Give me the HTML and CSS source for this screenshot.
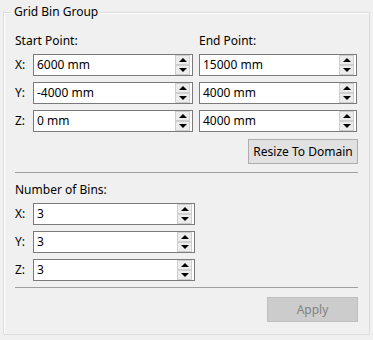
FILE: index.html
```html
<!DOCTYPE html>
<html lang="en">
<head>
    <meta charset="UTF-8">
    <title>Grid Bin Group</title>
    <link rel="stylesheet" href="styles.css">
</head>
<body>
    <div class="group">
        <div class="group-title">Grid Bin Group</div>

        <div class="point-grid">
            <div class="head">Start Point:</div>
            <div class="head end">End Point:</div>

            <div class="axis">X:</div>
            <div class="spin"><span class="value">6000 mm</span><div class="arrows"><i class="up"></i><i class="down"></i></div></div>
            <div class="spin"><span class="value">15000 mm</span><div class="arrows"><i class="up"></i><i class="down"></i></div></div>

            <div class="axis">Y:</div>
            <div class="spin"><span class="value">-4000 mm</span><div class="arrows"><i class="up"></i><i class="down"></i></div></div>
            <div class="spin"><span class="value">4000 mm</span><div class="arrows"><i class="up"></i><i class="down"></i></div></div>

            <div class="axis">Z:</div>
            <div class="spin"><span class="value">0 mm</span><div class="arrows"><i class="up"></i><i class="down"></i></div></div>
            <div class="spin"><span class="value">4000 mm</span><div class="arrows"><i class="up"></i><i class="down"></i></div></div>
        </div>

        <div class="button-row first">
            <button class="btn resize">Resize To Domain</button>
        </div>

        <div class="separator"></div>

        <div class="bins-grid">
            <div class="head">Number of Bins:</div>

            <div class="axis">X:</div>
            <div class="spin"><span class="value">3</span><div class="arrows"><i class="up"></i><i class="down"></i></div></div>

            <div class="axis">Y:</div>
            <div class="spin"><span class="value">3</span><div class="arrows"><i class="up"></i><i class="down"></i></div></div>

            <div class="axis">Z:</div>
            <div class="spin"><span class="value">3</span><div class="arrows"><i class="up"></i><i class="down"></i></div></div>
        </div>

        <div class="separator second"></div>

        <div class="button-row last">
            <button class="btn apply" disabled>Apply</button>
        </div>
    </div>
</body>
</html>
```

FILE: styles.css
```css
body {
    margin: 0;
    background: #f0f0f0;
    font-family: "Noto Sans", "Open Sans", sans-serif;
    font-size: 12px;
    color: #000;
}
.group {
    position: relative;
    box-sizing: border-box;
    width: 367px;
    height: 323px;
    margin: 12px 0 0 3px;
    padding: 20px 11px 0 11px;
    border: 1px solid #dcdcdc;
    box-shadow: inset 1px 1px 0 #fff;
}
.group-title {
    position: absolute;
    top: -9px;
    left: 7px;
    padding: 0 3px;
    background: #f0f0f0;
    line-height: 16px;
}
.point-grid, .bins-grid {
    display: grid;
    grid-template-columns: 12px 160px 158px;
    grid-auto-rows: 22px;
    grid-template-rows: 15px;
    column-gap: 6px;
    row-gap: 6px;
}
.bins-grid {
    grid-template-columns: 12px 162px;
    margin-top: 9px;
}
.head {
    grid-column: 1 / span 2;
    line-height: 15px;
}
.head.end {
    grid-column: 3;
}
.axis {
    line-height: 22px;
}
.spin {
    display: flex;
    align-items: center;
    box-sizing: border-box;
    border: 1px solid #7a7a7a;
    background: #fff;
}
.spin .value {
    flex: 1;
    padding-left: 3px;
    line-height: 20px;
}
.arrows {
    display: flex;
    flex-direction: column;
    width: 15px;
    height: 20px;
    margin-right: 2px;
}
.arrows i {
    flex: 1;
    display: flex;
    align-items: center;
    justify-content: center;
    box-sizing: border-box;
    border: 1px solid #cfcfcf;
    background: #ececec;
}
.arrows i + i {
    margin-top: 0;
}
.arrows i::after {
    content: "";
    border-left: 4px solid transparent;
    border-right: 4px solid transparent;
}
.arrows .up::after {
    border-bottom: 4px solid #000;
}
.arrows .down::after {
    border-top: 4px solid #000;
}
.button-row {
    display: flex;
    justify-content: flex-end;
}
.button-row.first {
    margin-top: 7px;
}
.button-row.last {
    margin-top: 9px;
}
.btn {
    box-sizing: border-box;
    height: 25px;
    padding: 0;
    font-family: inherit;
    font-size: 12px;
    color: #000;
    background: #e1e1e1;
    border: 1px solid #adadad;
    border-radius: 0;
}
.btn.resize {
    width: 110px;
}
.btn.apply {
    width: 91px;
    color: #838383;
    background: #cccccc;
    border-color: #bfbfbf;
}
.separator {
    height: 1px;
    margin-top: 8px;
    background: #a0a0a0;
}
.separator.second {
    margin-top: 6px;
}
```
